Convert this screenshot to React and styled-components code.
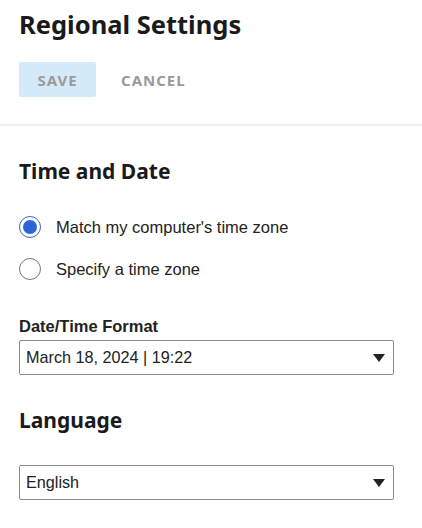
import React, { useState } from "react";
import styled, { createGlobalStyle } from "styled-components";

const Global = createGlobalStyle`
  html, body { margin: 0; padding: 0; background: #fff; }
  body { font-family: "Liberation Sans", Arial, sans-serif; color: #222; }
  * { box-sizing: border-box; }
`;

const Page = styled.div`
  width: 422px;
  display: flex;
  flex-direction: column;
`;

const Header = styled.div`
  padding: 8px 19px 27px;
  display: flex;
  flex-direction: column;
  gap: 22px;
`;

const Title = styled.h1`
  margin: 0;
  font-family: "Noto Sans", "Open Sans", sans-serif;
  font-weight: 700;
  font-size: 25.5px;
  line-height: 32px;
  color: #1a1a1a;
`;

const Actions = styled.div`
  display: flex;
  align-items: center;
  gap: 8px;
`;

const Button = styled.button`
  height: 35px;
  width: ${(p) => (p.$primary ? "77px" : "auto")};
  padding: 0 ${(p) => (p.$primary ? "0" : "17px")};
  border: none;
  border-radius: 2px;
  background: ${(p) => (p.$primary ? "#d5eaf9" : "transparent")};
  color: #9a9a9a;
  font-family: "Noto Sans", "Open Sans", sans-serif;
  font-weight: 700;
  font-size: 15px;
  letter-spacing: 1px;
  cursor: default;
`;

const Divider = styled.div`
  height: 2px;
  background: #f1f1f1;
`;

const Body = styled.div`
  padding: 32px 19px 0 19px;
  display: flex;
  flex-direction: column;
`;

const SectionTitle = styled.h2`
  margin: 0;
  font-family: "Noto Sans", "Open Sans", sans-serif;
  font-weight: 700;
  font-size: 21px;
  line-height: 26px;
  color: #1a1a1a;
`;

const RadioGroup = styled.div`
  display: flex;
  flex-direction: column;
  gap: 20px;
  margin-top: 32px;
`;

const RadioRow = styled.label`
  display: flex;
  align-items: center;
  gap: 15px;
  font-size: 16.5px;
  color: #222;
  height: 22px;
`;

const RadioCircle = styled.span`
  width: 22px;
  height: 22px;
  border-radius: 50%;
  border: 1px solid ${(p) => (p.$checked ? "#3f5fd8" : "#767676")};
  display: flex;
  align-items: center;
  justify-content: center;
  flex-shrink: 0;
  &::after {
    content: "";
    width: 14px;
    height: 14px;
    border-radius: 50%;
    background: ${(p) => (p.$checked ? "#2b63d9" : "transparent")};
  }
`;

const FieldLabel = styled.div`
  margin-top: 36px;
  font-size: 16.5px;
  font-weight: 700;
  color: #222;
  line-height: 20px;
`;

const Select = styled.div`
  margin-top: ${(p) => p.$mt || 0}px;
  width: 375px;
  height: 35px;
  border: 1px solid #8a8a8a;
  border-radius: 2px;
  display: flex;
  align-items: center;
  justify-content: space-between;
  padding: 0 8px 0 6px;
  font-size: 16.2px;
  color: #222;
`;

const Arrow = styled.svg`
  width: 12px;
  height: 8px;
`;

const LanguageTitle = styled(SectionTitle)`
  margin-top: 32px;
`;

function Dropdown({ value, mt }) {
  return (
    <Select $mt={mt}>
      <span>{value}</span>
      <Arrow viewBox="0 0 12 8">
        <path d="M0 0 H12 L6 8 Z" fill="#222" />
      </Arrow>
    </Select>
  );
}

export default function App() {
  const [tz, setTz] = useState("match");
  return (
    <Page>
      <Global />
      <Header>
        <Title>Regional Settings</Title>
        <Actions>
          <Button $primary>SAVE</Button>
          <Button>CANCEL</Button>
        </Actions>
      </Header>
      <Divider />
      <Body>
        <SectionTitle>Time and Date</SectionTitle>
        <RadioGroup>
          <RadioRow onClick={() => setTz("match")}>
            <RadioCircle $checked={tz === "match"} />
            Match my computer's time zone
          </RadioRow>
          <RadioRow onClick={() => setTz("specify")}>
            <RadioCircle $checked={tz === "specify"} />
            Specify a time zone
          </RadioRow>
        </RadioGroup>
        <FieldLabel>Date/Time Format</FieldLabel>
        <Dropdown value="March 18, 2024 | 19:22" mt={4} />
        <LanguageTitle>Language</LanguageTitle>
        <Dropdown value="English" mt={32} />
      </Body>
    </Page>
  );
}
